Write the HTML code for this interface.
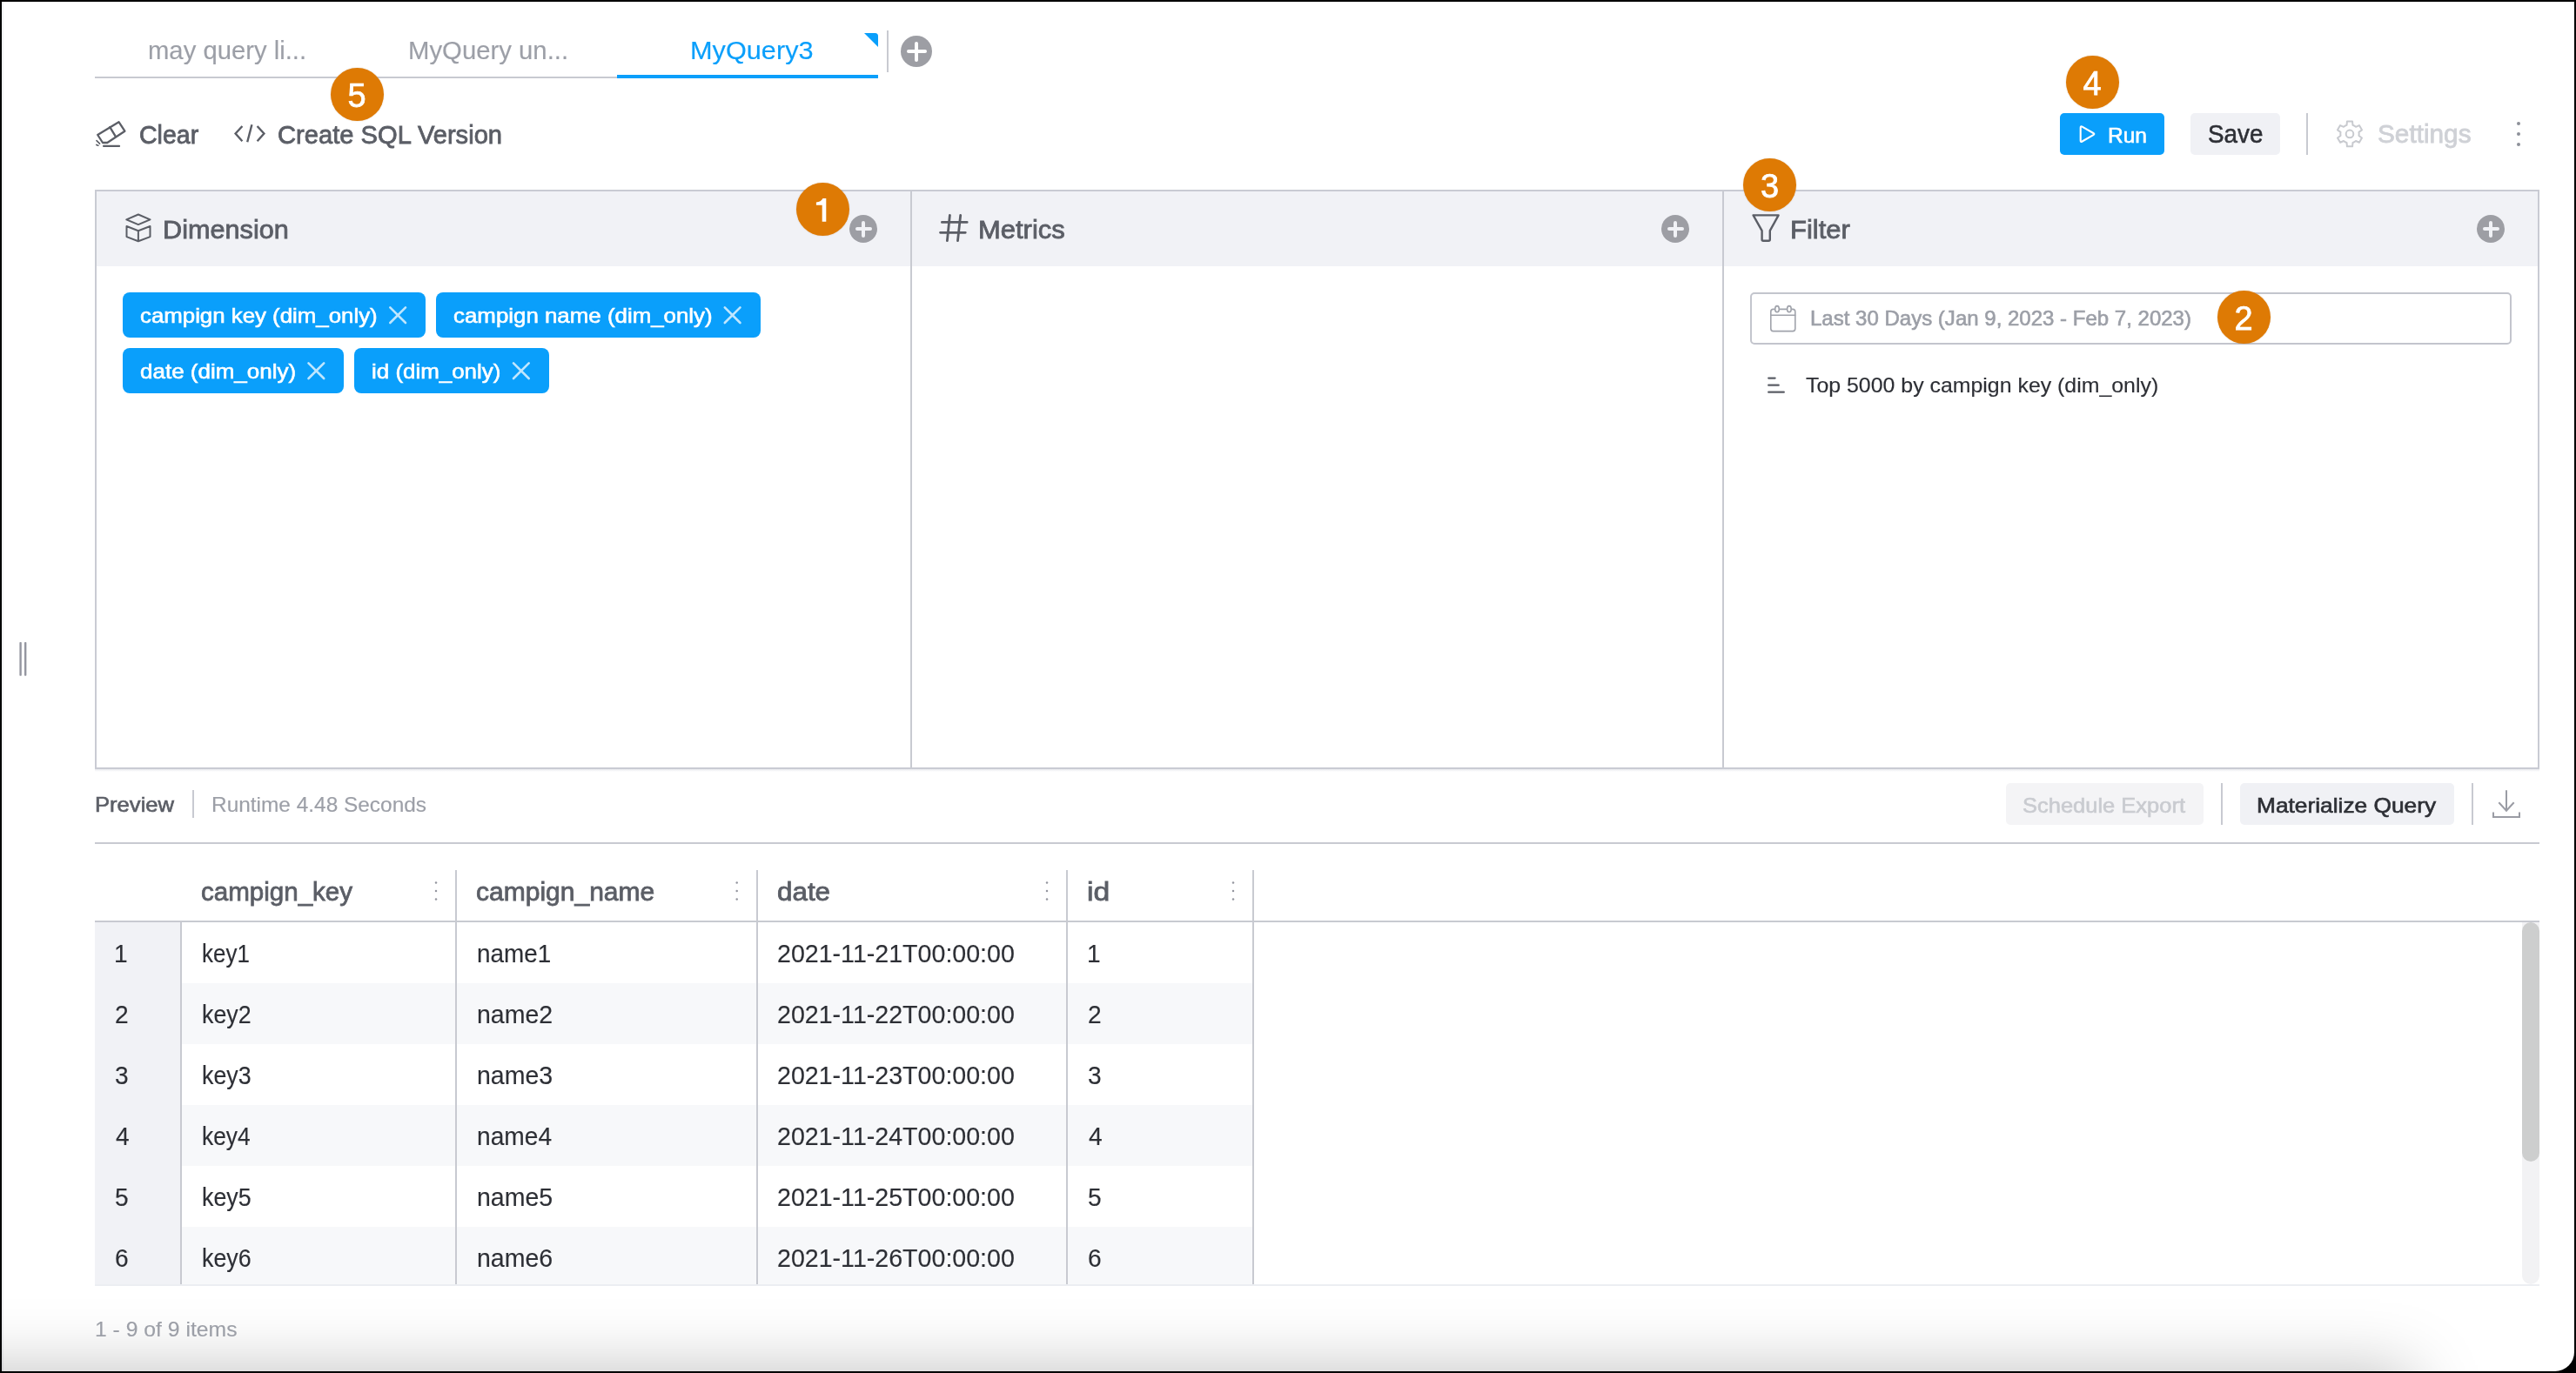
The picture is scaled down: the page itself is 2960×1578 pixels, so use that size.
<!DOCTYPE html>
<html lang="en"><head><meta charset="utf-8"><title>Query Builder</title>
<style>
*{box-sizing:border-box;margin:0;padding:0}
html,body{width:2960px;height:1578px;overflow:hidden;background:#000}
body{font-family:"Liberation Sans",sans-serif;position:relative}
.abs,.t,.ln,.box,svg.ic{position:absolute}
/* window frame: 2px black all round, rounded bottom-right */
#win{position:absolute;left:2px;top:2px;width:2956px;height:1574px;background:#fff;border-radius:0 0 22px 0;overflow:hidden}
#page{position:absolute;left:-2px;top:-2px;width:2960px;height:1578px;will-change:transform}
.t{white-space:nowrap;line-height:1;transform-origin:0 50%;font-weight:400;-webkit-text-stroke:0.15px currentColor}
.t.b{-webkit-text-stroke:0.8px currentColor}
.t.m{-webkit-text-stroke:0.55px currentColor}
.t.b2{-webkit-text-stroke:0.62px currentColor}
.ln{background:#c8cad1}
.hdr{background:#f1f2f6}
.chip{position:absolute;background:#0a9ffb;border-radius:8px;height:52px}
.btn{position:absolute;border-radius:5px;height:48px;top:130px}
.badge{position:absolute;width:61px;height:61px;border-radius:50%;background:#de7a04;color:#fff;font-size:38px;line-height:64.4px;text-align:center;-webkit-text-stroke:0.75px #fff;box-shadow:0 0 1.5px rgba(150,80,0,.35)}
.plus{position:absolute;border-radius:50%;background:#9d9ea4}
.plus:before,.plus:after{content:"";position:absolute;background:#f1f2f6;border-radius:2.2px}
.plus.s{width:32px;height:32px}
.plus.s:before{left:6.5px;top:14px;width:19px;height:4px}
.plus.s:after{left:14px;top:6.5px;width:4px;height:19px}
.plus.l{width:36px;height:36px}
.plus.l:before{left:6.5px;top:15.8px;width:23px;height:4.4px;background:#fff}
.plus.l:after{left:15.8px;top:6.5px;width:4.4px;height:23px;background:#fff}
.rowbg{position:absolute;left:209px;width:1230px;height:70px;background:#f7f8fa}
svg.ic{overflow:visible;fill:none;stroke-linecap:round;stroke-linejoin:round}
.dot{position:absolute;border-radius:50%}

</style></head>
<body>
<div id="win"><div id="page">

<!-- left edge strip + resize handle -->
<div class="abs" style="left:2px;top:2px;width:2px;height:1574px;background:#f1f2f4"></div>

<!-- tabs -->
<div class="ln" style="left:109px;top:88px;width:900px;height:2px"></div>
<div class="abs" style="left:709px;top:86px;width:300px;height:4px;background:#0a9ffb"></div>
<div class="ln" style="left:1019px;top:35px;width:2px;height:48px"></div>
<div class="plus l" style="left:1035px;top:41px"></div>

<!-- toolbar buttons -->
<div class="btn" style="left:2367px;width:120px;background:#0a9ffb"></div>
<div class="btn" style="left:2517px;width:103px;background:#f0f1f5"></div>
<div class="ln" style="left:2650px;top:130px;width:2px;height:48px"></div>
<div class="dot" style="left:2892px;top:140px;width:4px;height:4px;background:#8d9099"></div>
<div class="dot" style="left:2892px;top:152px;width:4px;height:4px;background:#8d9099"></div>
<div class="dot" style="left:2892px;top:164px;width:4px;height:4px;background:#8d9099"></div>

<!-- builder panel -->
<div class="abs hdr" style="left:111px;top:220px;width:2805px;height:85.5px"></div>
<div class="abs" style="left:109px;top:218px;width:2809px;height:665.5px;border:2px solid #c9cbd3"></div>
<div class="ln" style="left:1046px;top:220px;width:2px;height:662px"></div>
<div class="ln" style="left:1979px;top:220px;width:2px;height:662px"></div>
<div class="abs" style="left:109px;top:883.5px;width:2809px;height:3px;background:linear-gradient(#e9eaee,#fff)"></div>
<div class="plus s" style="left:976px;top:247px"></div>
<div class="plus s" style="left:1909px;top:247px"></div>
<div class="plus s" style="left:2846px;top:247px"></div>

<!-- chips -->
<div class="chip" style="left:141px;top:336px;width:348px"></div>
<div class="chip" style="left:501px;top:336px;width:373px"></div>
<div class="chip" style="left:141px;top:400px;width:254px"></div>
<div class="chip" style="left:407px;top:400px;width:224px"></div>

<!-- filter -->
<div class="abs" style="left:2011px;top:336px;width:875px;height:59.5px;border:2px solid #c3c5cd;border-radius:5px"></div>

<!-- preview bar -->
<div class="ln" style="left:221px;top:908px;width:2px;height:31.5px"></div>
<div class="abs" style="left:2305px;top:900px;width:227px;height:48px;border-radius:5px;background:#f4f4f6"></div>
<div class="ln" style="left:2552px;top:900px;width:2px;height:48px"></div>
<div class="abs" style="left:2574px;top:900px;width:246px;height:48px;border-radius:5px;background:#f0f1f5"></div>
<div class="ln" style="left:2840px;top:900px;width:2px;height:48px"></div>
<div class="ln" style="left:109px;top:968px;width:2809px;height:2px"></div>

<!-- table -->
<div class="abs hdr" style="left:109px;top:1060px;width:98px;height:417.5px"></div>
<div class="rowbg" style="top:1130px"></div>
<div class="rowbg" style="top:1270px"></div>
<div class="rowbg" style="top:1410px;height:67.5px"></div>
<div class="ln" style="left:109px;top:1058px;width:2809px;height:2px"></div>
<div class="ln" style="left:207px;top:1060px;width:2px;height:415.5px"></div>
<div class="ln" style="left:523px;top:1000px;width:2px;height:475.5px"></div>
<div class="ln" style="left:869px;top:1000px;width:2px;height:475.5px"></div>
<div class="ln" style="left:1225px;top:1000px;width:2px;height:475.5px"></div>
<div class="ln" style="left:1439px;top:1000px;width:2px;height:475.5px"></div>
<div class="abs" style="left:109px;top:1476px;width:2809px;height:2px;background:#eceef2"></div>
<!-- scrollbar -->
<div class="abs" style="left:2898px;top:1060px;width:20px;height:416px;background:#f2f2f4;border-radius:0 0 10px 10px"></div>
<div class="abs" style="left:2898px;top:1060px;width:20px;height:275px;background:#cdcece;border-radius:10px"></div>

<!-- bottom shadow -->
<div class="abs" id="shade" style="left:-400px;top:1577px;width:3172px;height:300px;box-shadow:0 0 74px rgba(0,0,0,.26)"></div>

<!-- icons -->
<svg class="ic" style="left:0;top:0" width="2960" height="1578" viewBox="0 0 2960 1578">
  <!-- resize handle -->
  <rect x="22.4" y="738" width="2.4" height="38.8" rx="0.8" fill="#9496a0" stroke="none"/>
  <rect x="28" y="738" width="2.4" height="38.8" rx="0.8" fill="#9496a0" stroke="none"/>
  <!-- active tab corner -->
  <path d="M993 38 H1005.5 Q1009 38 1009 41.5 V54 Z" fill="#0a9ffb" stroke="none"/>
  <!-- eraser -->
  <g stroke="#5b5e66" stroke-width="2.3">
    <path d="M136.5 140.2 L143.4 150.7 L123.3 164 H118 L112.2 155 Z"/>
    <path d="M126.3 146.1 L132.7 156.7"/>
    <path d="M119.1 167.9 H137"/>
    <path d="M111 161.6 L114.6 165.1 M110.8 166.4 L112.9 167.2" stroke-width="1.6"/>
  </g>
  <!-- code -->
  <g stroke="#5b5e66" stroke-width="2.4" stroke-linecap="butt" stroke-linejoin="miter">
    <path d="M278.4 145 L270.6 153.5 L278.4 162.2"/>
    <path d="M289.4 143.3 L284.2 163.3"/>
    <path d="M295.6 145 L303.4 153.5 L295.6 162.2"/>
  </g>
  <!-- play -->
  <path d="M2392.61 145.69 Q2390.70 144.60 2390.70 146.80 L2390.70 161.40 Q2390.70 163.60 2392.61 162.51 L2405.39 155.19 Q2407.30 154.10 2405.39 153.01 Z" stroke="#fff" stroke-width="2.1"/>
  <!-- gear -->
  <g id="gear" stroke="#c8cacf" stroke-width="2" transform="translate(2700 153.9)">
    <circle r="4.3"/>
    <path d="M3.48 -10.12 L3.06 -14.38 L-3.06 -14.38 L-3.48 -10.12 A10.70 10.70 0 0 0 -7.02 -8.08 L-10.92 -9.84 L-13.98 -4.54 L-10.50 -2.04 A10.70 10.70 0 0 0 -10.50 2.04 L-13.98 4.54 L-10.92 9.84 L-7.02 8.08 A10.70 10.70 0 0 0 -3.48 10.12 L-3.06 14.38 L3.06 14.38 L3.48 10.12 A10.70 10.70 0 0 0 7.02 8.08 L10.92 9.84 L13.98 4.54 L10.50 2.04 A10.70 10.70 0 0 0 10.50 -2.04 L13.98 -4.54 L10.92 -9.84 L7.02 -8.08 A10.70 10.70 0 0 0 3.48 -10.12 Z"/>
  </g>
  <!-- dimension cube -->
  <g stroke="#5b5e66" stroke-width="2">
    <path d="M158.9 246.5 L172.5 252.4 L158.9 258.1 L145.3 252.4 Z"/>
    <path d="M145.5 260 L158.9 265.2 L172.5 260 V272.1 L158.9 277.2 L145.5 272.1 Z M158.9 265.2 V277.2"/>
  </g>
  <!-- hash -->
  <g stroke="#5b5e66" stroke-width="2.8">
    <path d="M1082.4 255.4 H1111.2 M1080.5 267.3 H1109.3 M1091.4 247.3 L1088.4 276.6 M1103.7 247.3 L1100.5 276.6"/>
  </g>
  <!-- funnel -->
  <path d="M2014.6 247.4 H2043.6 L2033.8 265.2 V275.3 Q2033.8 276.8 2032.3 276.8 H2026.1 Q2024.6 276.8 2024.6 275.3 V265.2 Z" stroke="#5b5e66" stroke-width="2.4"/>
  <!-- chip X -->
  <g stroke="#fff" stroke-opacity=".74" stroke-width="2.6" stroke-linecap="round">
    <path d="M448.3 353.3 L466 371 M466 353.3 L448.3 371"/>
    <path d="M832.8 353.3 L850.5 371 M850.5 353.3 L832.8 371"/>
    <path d="M354.5 417.3 L372.2 435 M372.2 417.3 L354.5 435"/>
    <path d="M590 417.3 L607.7 435 M607.7 417.3 L590 435"/>
  </g>
  <!-- calendar -->
  <g stroke="#a0a3ab" stroke-width="1.6">
    <rect x="2034.8" y="355.4" width="28" height="25.2" rx="2.8"/>
    <path d="M2034.8 362.3 H2062.8"/>
    <ellipse cx="2042" cy="355.2" rx="2.3" ry="3.6" fill="#fff"/>
    <ellipse cx="2055.9" cy="355.2" rx="2.3" ry="3.6" fill="#fff"/>
  </g>
  <!-- sort -->
  <path d="M2032.2 434.6 H2039.6 M2032.2 442.7 H2043.7 M2032.2 450.7 H2049.8" stroke="#5b5e66" stroke-width="2.3"/>
  <!-- download -->
  <g stroke="#9a9ca4" stroke-width="2" stroke-linecap="butt" stroke-linejoin="miter">
    <path d="M2880 908.3 V931.5 M2871.3 922.3 L2880 931.8 L2888.7 922.3"/>
    <path d="M2865 933.5 V939 H2895 V933.5"/>
  </g>
  <!-- header kebabs -->
  <g fill="#94969f" stroke="none">
    <circle cx="501" cy="1014.5" r="1.25"/><circle cx="501" cy="1024" r="1.25"/><circle cx="501" cy="1033.5" r="1.25"/>
    <circle cx="846.7" cy="1014.5" r="1.25"/><circle cx="846.7" cy="1024" r="1.25"/><circle cx="846.7" cy="1033.5" r="1.25"/>
    <circle cx="1203" cy="1014.5" r="1.25"/><circle cx="1203" cy="1024" r="1.25"/><circle cx="1203" cy="1033.5" r="1.25"/>
    <circle cx="1417" cy="1014.5" r="1.25"/><circle cx="1417" cy="1024" r="1.25"/><circle cx="1417" cy="1033.5" r="1.25"/>
  </g>
</svg>

<!-- text -->
<span class="t" style="left:169.59px;top:44.00px;font-size:29px;color:#9c9fa7;transform:scaleX(1.0088);">may query li...</span>
<span class="t" style="left:468.98px;top:44.00px;font-size:29px;color:#9c9fa7;transform:scaleX(1.0109);">MyQuery un...</span>
<span class="t" style="left:793.38px;top:44.00px;font-size:29px;color:#0a9ffb;transform:scaleX(1.0583);">MyQuery3</span>
<span class="t b" style="left:160.02px;top:141.00px;font-size:29px;color:#5b5e66;transform:scaleX(0.9848);">Clear</span>
<span class="t b" style="left:319.00px;top:141.00px;font-size:29px;color:#5b5e66;transform:scaleX(1.0048);">Create SQL Version</span>
<span class="t b2" style="left:2421.68px;top:144.00px;font-size:24px;color:#ffffff;transform:scaleX(1.0221);">Run</span>
<span class="t m" style="left:2536.64px;top:140.00px;font-size:29px;color:#2d2f35;transform:scaleX(0.9598);">Save</span>
<span class="t b" style="left:2731.97px;top:140.00px;font-size:29px;color:#cfd1d6;transform:scaleX(1.0263);">Settings</span>
<span class="t b" style="left:187.39px;top:250.00px;font-size:29px;color:#5b5e66;transform:scaleX(1.0570);">Dimension</span>
<span class="t b" style="left:1124.46px;top:250.00px;font-size:29px;color:#5b5e66;transform:scaleX(1.0677);">Metrics</span>
<span class="t b" style="left:2057.17px;top:250.00px;font-size:29px;color:#5b5e66;transform:scaleX(1.0671);">Filter</span>
<span class="t b2" style="left:160.92px;top:351.00px;font-size:24px;color:#ffffff;transform:scaleX(1.0758);">campign key (dim_only)</span>
<span class="t b2" style="left:520.92px;top:351.00px;font-size:24px;color:#ffffff;transform:scaleX(1.0780);">campign name (dim_only)</span>
<span class="t b2" style="left:160.92px;top:415.00px;font-size:24px;color:#ffffff;transform:scaleX(1.0831);">date (dim_only)</span>
<span class="t b2" style="left:426.92px;top:415.00px;font-size:24px;color:#ffffff;transform:scaleX(1.0802);">id (dim_only)</span>
<span class="t b2" style="left:2080.00px;top:354.00px;font-size:24px;color:#9c9fa7;transform:scaleX(1.0009);">Last 30 Days (Jan 9, 2023 - Feb 7, 2023)</span>
<span class="t" style="left:2075.30px;top:431.00px;font-size:24px;color:#2d2f35;transform:scaleX(1.0367);">Top 5000 by campign key (dim_only)</span>
<span class="t b2" style="left:108.93px;top:913.00px;font-size:24px;color:#5b5e66;transform:scaleX(1.0673);">Preview</span>
<span class="t" style="left:243.48px;top:913.00px;font-size:24px;color:#9c9fa7;transform:scaleX(1.0173);">Runtime 4.48 Seconds</span>
<span class="t b2" style="left:2323.94px;top:914.00px;font-size:24px;color:#c9cbd0;transform:scaleX(1.0616);">Schedule Export</span>
<span class="t b2" style="left:2593.40px;top:914.00px;font-size:24px;color:#2d2f35;transform:scaleX(1.0959);">Materialize Query</span>
<span class="t b" style="left:230.98px;top:1011.00px;font-size:29px;color:#5b5e66;transform:scaleX(1.0184);">campign_key</span>
<span class="t b" style="left:546.97px;top:1011.00px;font-size:29px;color:#5b5e66;transform:scaleX(1.0349);">campign_name</span>
<span class="t b" style="left:893.17px;top:1011.00px;font-size:29px;color:#5b5e66;transform:scaleX(1.0817);">date</span>
<span class="t b" style="left:1248.84px;top:1011.00px;font-size:29px;color:#5b5e66;transform:scaleX(1.1618);">id</span>
<span class="t" style="left:131.06px;top:1082.00px;font-size:29px;color:#2d2f35;transform:scaleX(0.9690);">1</span>
<span class="t" style="left:232.31px;top:1082.00px;font-size:29px;color:#2d2f35;transform:scaleX(0.8947);">key1</span>
<span class="t" style="left:548.24px;top:1082.00px;font-size:29px;color:#2d2f35;transform:scaleX(0.9614);">name1</span>
<span class="t" style="left:893.26px;top:1082.00px;font-size:29px;color:#2d2f35;transform:scaleX(0.9858);">2021-11-21T00:00:00</span>
<span class="t" style="left:1249.06px;top:1082.00px;font-size:29px;color:#2d2f35;transform:scaleX(0.9690);">1</span>
<span class="t" style="left:132.03px;top:1152.00px;font-size:29px;color:#2d2f35;transform:scaleX(0.9690);">2</span>
<span class="t" style="left:232.28px;top:1152.00px;font-size:29px;color:#2d2f35;transform:scaleX(0.9234);">key2</span>
<span class="t" style="left:548.22px;top:1152.00px;font-size:29px;color:#2d2f35;transform:scaleX(0.9822);">name2</span>
<span class="t" style="left:893.26px;top:1152.00px;font-size:29px;color:#2d2f35;transform:scaleX(0.9858);">2021-11-22T00:00:00</span>
<span class="t" style="left:1250.03px;top:1152.00px;font-size:29px;color:#2d2f35;transform:scaleX(0.9690);">2</span>
<span class="t" style="left:132.03px;top:1222.00px;font-size:29px;color:#2d2f35;transform:scaleX(0.9690);">3</span>
<span class="t" style="left:232.28px;top:1222.00px;font-size:29px;color:#2d2f35;transform:scaleX(0.9234);">key3</span>
<span class="t" style="left:548.22px;top:1222.00px;font-size:29px;color:#2d2f35;transform:scaleX(0.9822);">name3</span>
<span class="t" style="left:893.26px;top:1222.00px;font-size:29px;color:#2d2f35;transform:scaleX(0.9858);">2021-11-23T00:00:00</span>
<span class="t" style="left:1250.03px;top:1222.00px;font-size:29px;color:#2d2f35;transform:scaleX(0.9690);">3</span>
<span class="t" style="left:133.00px;top:1292.00px;font-size:29px;color:#2d2f35;transform:scaleX(0.9690);">4</span>
<span class="t" style="left:232.29px;top:1292.00px;font-size:29px;color:#2d2f35;transform:scaleX(0.9081);">key4</span>
<span class="t" style="left:548.23px;top:1292.00px;font-size:29px;color:#2d2f35;transform:scaleX(0.9710);">name4</span>
<span class="t" style="left:893.26px;top:1292.00px;font-size:29px;color:#2d2f35;transform:scaleX(0.9858);">2021-11-24T00:00:00</span>
<span class="t" style="left:1251.00px;top:1292.00px;font-size:29px;color:#2d2f35;transform:scaleX(0.9690);">4</span>
<span class="t" style="left:132.03px;top:1362.00px;font-size:29px;color:#2d2f35;transform:scaleX(0.9690);">5</span>
<span class="t" style="left:232.28px;top:1362.00px;font-size:29px;color:#2d2f35;transform:scaleX(0.9234);">key5</span>
<span class="t" style="left:548.22px;top:1362.00px;font-size:29px;color:#2d2f35;transform:scaleX(0.9822);">name5</span>
<span class="t" style="left:893.26px;top:1362.00px;font-size:29px;color:#2d2f35;transform:scaleX(0.9858);">2021-11-25T00:00:00</span>
<span class="t" style="left:1250.03px;top:1362.00px;font-size:29px;color:#2d2f35;transform:scaleX(0.9690);">5</span>
<span class="t" style="left:132.03px;top:1432.00px;font-size:29px;color:#2d2f35;transform:scaleX(0.9690);">6</span>
<span class="t" style="left:232.28px;top:1432.00px;font-size:29px;color:#2d2f35;transform:scaleX(0.9234);">key6</span>
<span class="t" style="left:548.22px;top:1432.00px;font-size:29px;color:#2d2f35;transform:scaleX(0.9822);">name6</span>
<span class="t" style="left:893.26px;top:1432.00px;font-size:29px;color:#2d2f35;transform:scaleX(0.9858);">2021-11-26T00:00:00</span>
<span class="t" style="left:1250.03px;top:1432.00px;font-size:29px;color:#2d2f35;transform:scaleX(0.9690);">6</span>
<span class="t" style="left:109.47px;top:1516.00px;font-size:24px;color:#9c9fa7;transform:scaleX(1.0302);">1 - 9 of 9 items</span>

<!-- numbered callouts -->
<div class="badge" role="img" aria-label="1" style="left:915.4px;top:209.7px"></div>
<div class="badge" style="left:2547.5px;top:333.5px">2</div>
<div class="badge" style="left:2003.2px;top:181.6px">3</div>
<div class="badge" style="left:2373.5px;top:63.5px">4</div>
<div class="badge" style="left:379.5px;top:77.5px">5</div>

<svg class="ic" style="left:0;top:0" width="2960" height="300" viewBox="0 0 2960 300">
  <path d="M944.7 228.1 H949.3 V254.8 H944.7 V235.7 H937.9 V232.4 Q943.4 232.2 945.5 228.1 Z" fill="#fff" stroke="none"/>
</svg>
</div></div>

</body></html>
